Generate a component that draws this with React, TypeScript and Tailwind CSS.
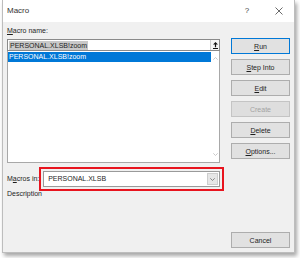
import React from "react";

function Btn({
  children,
  primary,
  disabled,
}: {
  children: React.ReactNode;
  primary?: boolean;
  disabled?: boolean;
}) {
  return (
    <div
      className={
        "flex h-[16px] items-center justify-center border text-[7px] leading-none " +
        (primary
          ? "border-[#0078d7] bg-[#e1e1e1] text-[#1e1e1e]"
          : disabled
            ? "border-[#c4c4c4] bg-[#dedede] text-[#a3a3a3]"
            : "border-[#adadad] bg-[#e1e1e1] text-[#1e1e1e]")
      }
    >
      {children}
    </div>
  );
}

function U({ children }: { children: React.ReactNode }) {
  return <span className="underline underline-offset-1">{children}</span>;
}

export default function App() {
  return (
    <div className="h-[258px] w-[300px] overflow-hidden bg-white pl-[2px] font-['Liberation_Sans',Arial,sans-serif] text-[7px] text-[#1e1e1e]">
      <div className="flex h-[253px] w-[293px] flex-col border-x border-b border-[#bdbdbd] bg-[#f0f0f0] shadow-[2px_3px_4px_rgba(0,0,0,0.35)]">
        {/* title bar */}
        <div className="flex h-[22px] items-center bg-white pl-[4px]">
          <span className="text-[8px] text-[#333]">Macro</span>
          <span className="ml-auto w-[8px] text-center text-[8px] text-[#444]">?</span>
          <svg className="ml-[24px] mr-[11px]" width="8" height="8" viewBox="0 0 8 8">
            <path d="M0.5 0.5 L7.5 7.5 M7.5 0.5 L0.5 7.5" stroke="#444" strokeWidth="0.8" fill="none" />
          </svg>
        </div>

        <div className="flex flex-1 pl-[4px] pr-[4px]">
          {/* left column */}
          <div className="flex w-[213px] flex-col">
            <div className="mt-[5px] h-[8px] leading-[8px]">
              <U>M</U>acro name:
            </div>
            <div className="mt-[4px] flex h-[12px] items-center border border-[#8a8a8a] bg-white pl-[1px]">
              <span className="bg-[#c8c8c8] px-[1px] leading-[9px]">PERSONAL.XLSB!zoom</span>
              <div className="ml-auto flex h-[10px] w-[9px] items-center justify-center border-l border-[#cfcfcf] bg-[#f4f4f4]">
                <svg width="5" height="7" viewBox="0 0 5 7">
                  <path d="M2.5 0 L5 2.6 L3.1 2.6 L3.1 5.2 L1.9 5.2 L1.9 2.6 L0 2.6 Z" fill="#111" />
                  <rect x="0" y="6" width="5" height="1" fill="#111" />
                </svg>
              </div>
            </div>
            <div className="flex h-[112px] border border-t-0 border-[#a8a8a8] bg-white">
              <div className="flex-1 pt-[1px]">
                <div className="flex h-[10px] items-center bg-[#0078d7] pl-[1px] text-white">
                  PERSONAL.XLSB!zoom
                </div>
              </div>
              <div className="flex w-[8px] flex-col items-center justify-between py-[6px]">
                <svg width="5" height="3" viewBox="0 0 5 3">
                  <path d="M0.3 2.7 L2.5 0.5 L4.7 2.7" stroke="#bdbdbd" strokeWidth="0.8" fill="none" />
                </svg>
                <svg width="5" height="3" viewBox="0 0 5 3">
                  <path d="M0.3 0.3 L2.5 2.5 L4.7 0.3" stroke="#bdbdbd" strokeWidth="0.8" fill="none" />
                </svg>
              </div>
            </div>

            <div className="mt-[8px] flex h-[16px] items-center">
              <div className="w-[37px]">
                M<U>a</U>cros in:
              </div>
              <div className="relative flex h-[16px] w-[181px] items-center border border-[#9a9a9a] bg-white pl-[4px]">
                <span>PERSONAL.XLSB</span>
                <div className="ml-auto mr-[1px] flex h-[12px] w-[11px] items-center justify-center border border-[#cdcdcd] bg-[#e6e6e6]">
                  <svg width="5" height="3" viewBox="0 0 5 3">
                    <path d="M0.3 0.3 L2.5 2.5 L4.7 0.3" stroke="#707070" strokeWidth="0.8" fill="none" />
                  </svg>
                </div>
                <div className="pointer-events-none absolute -top-[5px] -bottom-[5px] -left-[5px] -right-[5px] border-2 border-[#e8141e]" />
              </div>
            </div>
            <div className="mt-[3px] h-[8px] leading-[8px]">Description</div>
          </div>

          {/* right column */}
          <div className="ml-[11px] flex w-[59px] flex-col gap-[5px] pb-[4px] pt-[16px]">
            <Btn primary>
              <U>R</U>un
            </Btn>
            <Btn>
              <U>S</U>tep Into
            </Btn>
            <Btn>
              <U>E</U>dit
            </Btn>
            <Btn disabled>Create</Btn>
            <Btn>
              <U>D</U>elete
            </Btn>
            <Btn>
              <U>O</U>ptions...
            </Btn>
            <div className="mt-auto">
              <Btn>Cancel</Btn>
            </div>
          </div>
        </div>
      </div>
    </div>
  );
}
